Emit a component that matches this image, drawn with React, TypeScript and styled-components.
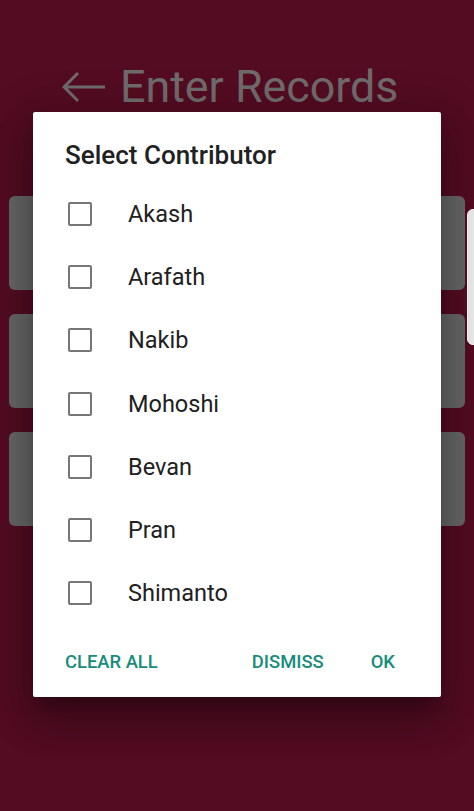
import React from "react";
import styled, { createGlobalStyle } from "styled-components";

const Global = createGlobalStyle`
  html, body { margin: 0; padding: 0; background: #530c22; }
  body { font-family: Roboto, "Noto Sans", "Liberation Sans", sans-serif; }
  * { box-sizing: border-box; }
`;

const Screen = styled.div`
  position: relative;
  width: 474px;
  height: 811px;
  overflow: hidden;
  background: #530c22;
  display: flex;
  flex-direction: column;
`;

const Header = styled.div`
  display: flex;
  align-items: center;
  height: 46px;
  margin-top: 64px;
  padding-left: 62px;
  gap: 14px;
`;

const HeaderTitle = styled.div`
  font-size: 44.8px;
  line-height: 46px;
  font-weight: 400;
  color: #6f6b6c;
  white-space: nowrap;
`;

const Cards = styled.div`
  display: flex;
  flex-direction: column;
  gap: 24px;
  margin-top: 86px;
  padding: 0 9px;
`;

const Card = styled.div`
  height: 94px;
  border-radius: 6px;
  background: #666666;
`;

const SideTab = styled.div`
  position: absolute;
  left: 467px;
  top: 209px;
  width: 20px;
  height: 136px;
  border-radius: 6px;
  background: #ececec;
  border: 1px solid #ffffff;
`;

const Dialog = styled.div`
  position: absolute;
  left: 33px;
  top: 112px;
  width: 408px;
  height: 585px;
  background: #ffffff;
  border-radius: 2px;
  box-shadow: 0 11px 15px -7px rgba(0, 0, 0, 0.28),
    0 24px 38px 3px rgba(0, 0, 0, 0.2), 0 9px 46px 8px rgba(0, 0, 0, 0.16);
  padding-top: 27px;
  display: flex;
  flex-direction: column;
`;

const DialogTitle = styled.div`
  padding-left: 32px;
  font-size: 26px;
  line-height: 32px;
  font-weight: 500;
  color: #212121;
`;

const List = styled.div`
  margin-top: 11.4px;
  display: flex;
  flex-direction: column;
`;

const Row = styled.div`
  height: 63.2px;
  display: flex;
  align-items: center;
  padding-left: 35px;
  gap: 36px;
`;

const Box = styled.div`
  width: 24px;
  height: 24px;
  border: 2.5px solid #767676;
  border-radius: 2px;
  flex: none;
`;

const Label = styled.div`
  font-size: 23.5px;
  font-weight: 400;
  color: #212121;
  line-height: 28px;
`;

const ButtonBar = styled.div`
  margin-top: 6px;
  height: 63px;
  display: flex;
  align-items: center;
  padding: 0 46px 0 32px;
`;

const Spacer = styled.div`
  flex: 1;
`;

const TextButton = styled.div<{ $gap?: number }>`
  font-size: 18.4px;
  font-weight: 500;
  color: #178c7b;
  line-height: 22px;
  margin-left: ${(p) => p.$gap ?? 0}px;
  white-space: nowrap;
`;

const names = ["Akash", "Arafath", "Nakib", "Mohoshi", "Bevan", "Pran", "Shimanto"];

export default function App() {
  return (
    <>
      <Global />
      <Screen>
        <Header>
          <svg width="44" height="32" viewBox="0 0 44 32" fill="none">
            <path
              d="M43 16 H3 M16 2 L2 16 L16 30"
              stroke="#6f6b6c"
              strokeWidth="3"
              strokeLinecap="butt"
              strokeLinejoin="miter"
            />
          </svg>
          <HeaderTitle>Enter Records</HeaderTitle>
        </Header>
        <Cards>
          <Card />
          <Card />
          <Card />
        </Cards>
        <SideTab />
        <Dialog>
          <DialogTitle>Select Contributor</DialogTitle>
          <List>
            {names.map((n) => (
              <Row key={n}>
                <Box />
                <Label>{n}</Label>
              </Row>
            ))}
          </List>
          <ButtonBar>
            <TextButton>CLEAR ALL</TextButton>
            <Spacer />
            <TextButton>DISMISS</TextButton>
            <TextButton $gap={47}>OK</TextButton>
          </ButtonBar>
        </Dialog>
      </Screen>
    </>
  );
}
